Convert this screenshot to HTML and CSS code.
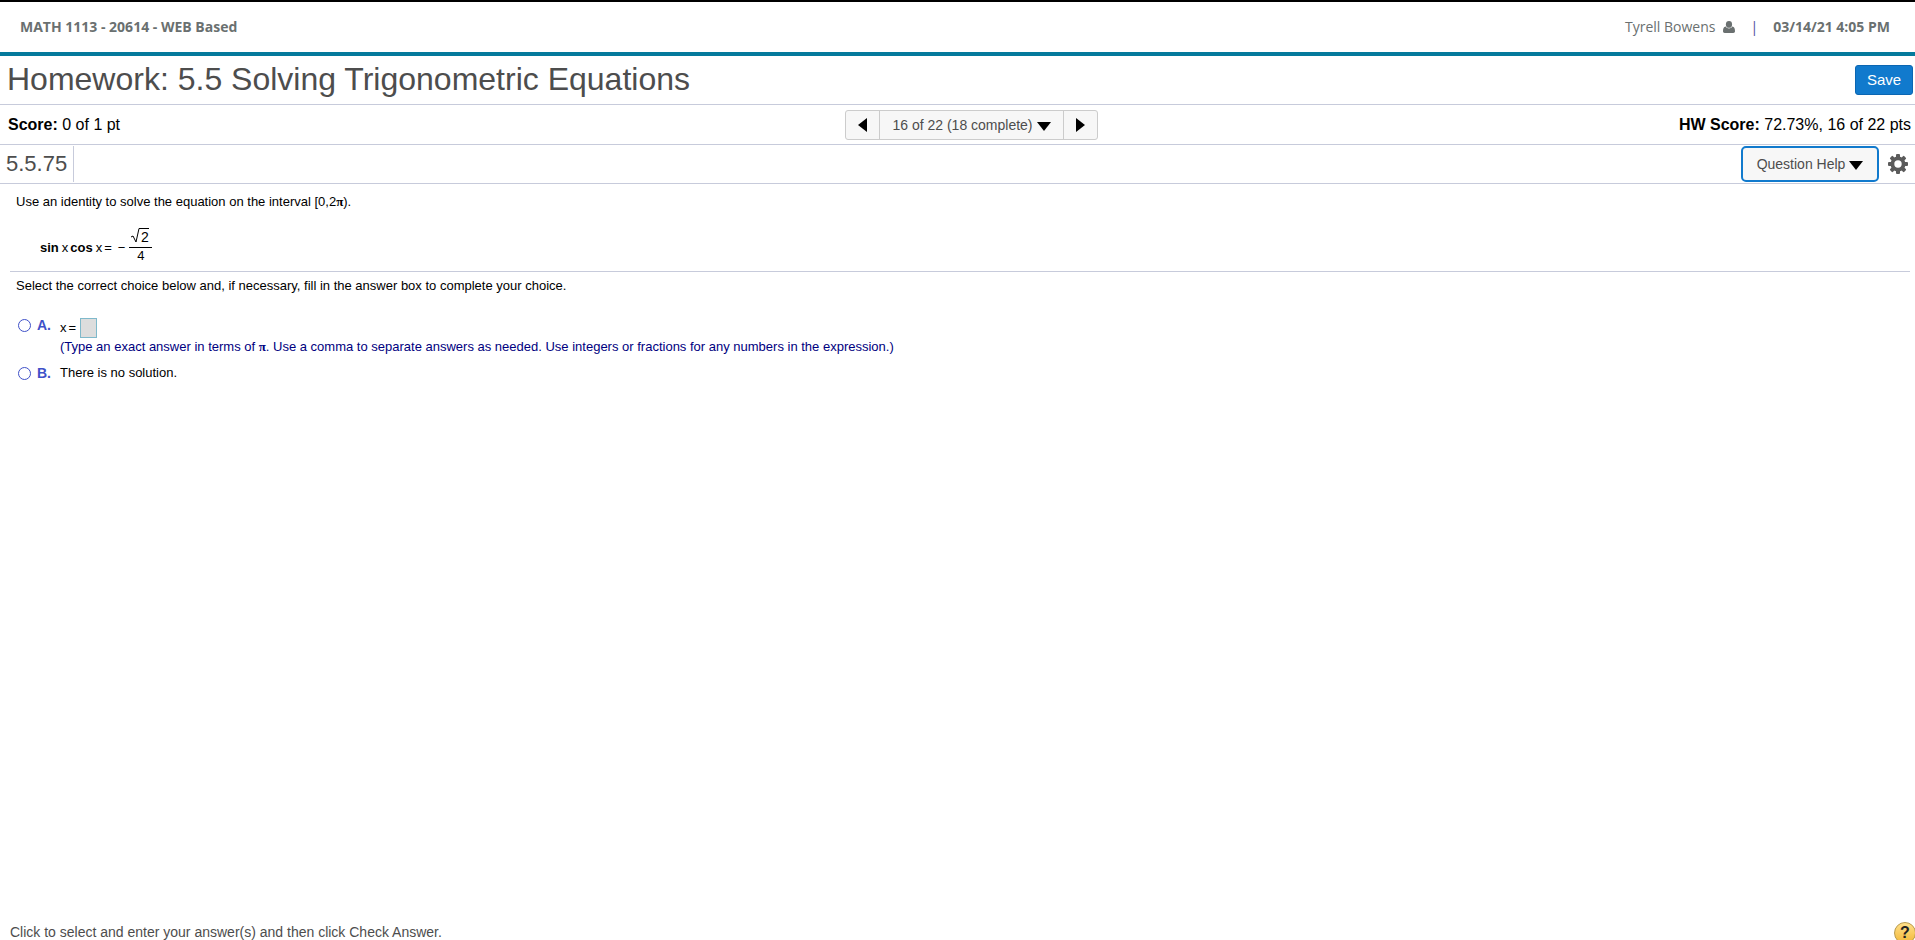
FILE: index.html
```html
<!DOCTYPE html>
<html lang="en">
<head>
<meta charset="utf-8">
<title>Homework: 5.5 Solving Trigonometric Equations</title>
<link rel="stylesheet" href="styles.css">
</head>
<body>
<div class="page">
  <header class="topbar">
    <span class="course">MATH 1113 - 20614 - WEB Based</span>
    <div class="account">
      <span>Tyrell Bowens</span>
      <svg class="user-icon" viewBox="0 0 12 12" aria-hidden="true"><ellipse cx="6" cy="3.400" rx="3.100" ry="3.400"/><path d="M2.700 5.500C3.500 6.900 4.600 7.400 6 7.400S8.500 6.900 9.300 5.500C11.400 5.900 12 7.800 12 10.300C12 11.400 11.300 12 10.300 12H1.700C.7 12 0 11.400 0 10.300C0 7.800.6 5.900 2.700 5.500Z"/></svg>
      <span class="divider">|</span>
      <time class="date" datetime="2021-03-14T16:05">03/14/21 4:05 PM</time>
    </div>
  </header>

  <div class="titlebar">
    <h1 class="title">Homework: 5.5 Solving Trigonometric Equations</h1>
    <button class="save" type="button">Save</button>
  </div>

  <div class="scorebar">
    <span><b>Score:</b> 0 of 1 pt</span>
    <nav class="pager" aria-label="Questions">
      <button class="pager-step" type="button" aria-label="Previous question"><svg class="arrow-side" viewBox="0 0 9 14"><path d="M9 0V14L0 7Z"/></svg></button>
      <button class="pager-list" type="button">16 of 22 (18 complete)<svg class="arrow-down" viewBox="0 0 14 9"><path d="M0 0H14L7 9Z"/></svg></button>
      <button class="pager-step" type="button" aria-label="Next question"><svg class="arrow-side" viewBox="0 0 9 14"><path d="M0 0V14L9 7Z"/></svg></button>
    </nav>
    <span class="hw-score"><b>HW Score:</b> 72.73%, 16 of 22 pts</span>
  </div>

  <div class="questionbar">
    <h2 class="question-id">5.5.75</h2>
    <div class="tools">
      <button class="help" type="button">Question Help<svg class="arrow-down" viewBox="0 0 14 9"><path d="M0 0H14L7 9Z"/></svg></button>
      <button class="settings" type="button" aria-label="Settings"><svg class="gear" viewBox="-10 -10 20 20"><rect x="-2" y="-10" width="4" height="20" rx="1"/><rect x="-2" y="-10" width="4" height="20" rx="1" transform="rotate(45)"/><rect x="-2" y="-10" width="4" height="20" rx="1" transform="rotate(90)"/><rect x="-2" y="-10" width="4" height="20" rx="1" transform="rotate(135)"/><circle r="7.500"/><circle class="gear-hole" r="3.700"/></svg></button>
    </div>
  </div>

  <main class="content">
    <section class="problem">
      <p class="text">Use an identity to solve the equation on the interval [0,2<span class="pi">π</span>).</p>
      <div class="equation">
        <b>sin</b><span>x</span><b>cos</b><span>x</span><span>=</span><span class="minus">−</span>
        <span class="fraction">
          <span class="numerator"><svg class="root" viewBox="0 0 18 15" aria-hidden="true"><path d="M0 9L2 8L5 14L8 .5H18"/></svg><span>2</span></span>
          <span class="denominator">4</span>
        </span>
      </div>
    </section>

    <form class="answers">
      <p class="text">Select the correct choice below and, if necessary, fill in the answer box to complete your choice.</p>
      <div class="choice choice-a">
        <input class="radio" type="radio" name="choice" id="choice-a">
        <label class="letter" for="choice-a">A.</label>
        <div class="choice-body">
          <div class="answer-line"><label class="answer-label" for="answer"><span>x</span><span>=</span></label><input class="answer" id="answer" type="text"></div>
          <p class="hint">(Type an exact answer in terms of <span class="pi">π</span>. Use a comma to separate answers as needed. Use integers or fractions for any numbers in the expression.)</p>
        </div>
      </div>
      <div class="choice">
        <input class="radio" type="radio" name="choice" id="choice-b">
        <label class="letter" for="choice-b">B.</label>
        <label for="choice-b">There is no solution.</label>
      </div>
    </form>
  </main>

  <footer class="footer">Click to select and enter your answer(s) and then click Check Answer.</footer>
  <button class="assist" type="button" aria-label="Help">?</button>
</div>
</body>
</html>
```
FILE: styles.css
```css
* {
  box-sizing: border-box;
}

body {
  margin: 0;
  background: #fff;
  color: #000;
  font: 13px/16px "Liberation Sans", Arial, sans-serif;
}

h1, h2, p {
  margin: 0;
  font-weight: normal;
}

button {
  margin: 0;
  padding: 0;
  border: 0;
  background: none;
  font: 14px/16px "Liberation Sans", Arial, sans-serif;
  color: #4d4d4d;
}

.page {
  position: relative;
  display: flex;
  flex-direction: column;
  height: 100vh;
  overflow: hidden;
}

.topbar {
  display: flex;
  align-items: center;
  justify-content: space-between;
  height: 56px;
  padding: 0 25px 0 20px;
  border-top: 2px solid #000;
  border-bottom: 4px solid #047a9c;
  color: #6a7070;
  font: 14px/20px "Open Sans", sans-serif;
}

.course,
.date {
  font-weight: 700;
}

.account {
  display: flex;
  align-items: center;
}

.user-icon {
  width: 12px;
  height: 12px;
  margin-left: 8px;
  fill: #6a7070;
}

.divider {
  margin: 0 15px;
  color: #4a4a9c;
}

.titlebar,
.scorebar,
.questionbar {
  display: flex;
  align-items: center;
  justify-content: space-between;
  border-bottom: 1px solid #c7cbdb;
}

.titlebar {
  height: 49px;
  padding: 0 2px 0 7px;
}

.title {
  align-self: flex-start;
  color: #4d4d4d;
  font-size: 32px;
  line-height: 46px;
}

.save {
  width: 58px;
  height: 30px;
  border: 1px solid #0b66b2;
  border-radius: 3px;
  background: #117acd;
  color: #fff;
  font-size: 15px;
}

.scorebar {
  display: grid;
  grid-template-columns: 1fr auto 1fr;
  height: 40px;
  padding: 0 4px 0 8px;
  font-size: 16px;
}

.hw-score {
  text-align: right;
}

.pager {
  display: flex;
  height: 30px;
  margin-left: 24px;
  border: 1px solid #ccc;
  border-radius: 3px;
  background: #f7f7f7;
}

.pager-step {
  display: flex;
  align-items: center;
  justify-content: center;
  width: 33px;
}

.pager-list {
  padding: 0 12px;
  border: solid #ccc;
  border-width: 0 1px;
}

.arrow-side {
  width: 9px;
  height: 14px;
}

.arrow-down {
  width: 14px;
  height: 9px;
  margin-left: 4px;
  vertical-align: -1px;
  fill: #000;
}

.questionbar {
  height: 39px;
  padding-right: 7px;
}

.question-id {
  align-self: stretch;
  margin: 1px 0;
  padding: 0 6px;
  border-right: 1px solid #c7cbdb;
  color: #4d4d4d;
  font-size: 22px;
  line-height: 36px;
}

.tools {
  display: flex;
  align-items: center;
  gap: 9px;
}

.help {
  width: 138px;
  height: 36px;
  border: 2px solid #117acd;
  border-radius: 5px;
  background: #f7f7f7;
}

.settings,
.gear {
  display: block;
  width: 20px;
  height: 20px;
  fill: #5b5b5b;
}

.gear .gear-hole {
  fill: #fff;
}

.content {
  flex: 1;
  padding: 10px 5px 0 10px;
}

.problem {
  height: 78px;
  border-bottom: 1px solid #c7cbdb;
}

.text {
  padding-left: 6px;
}

.pi {
  font-family: "Liberation Serif", serif;
  font-weight: bold;
  line-height: 1;
}

.equation {
  display: flex;
  align-items: center;
  gap: 2px;
  padding: 18px 0 0 30px;
}

.equation b + span {
  margin-left: 1px;
}

.minus {
  margin: 0 2px 0 4px;
}

.fraction {
  display: flex;
  flex-direction: column;
  width: 23px;
  margin-bottom: 4px;
  text-align: center;
}

.numerator {
  position: relative;
  padding-left: 8px;
  height: 20px;
  border-bottom: 1px solid #000;
  font-size: 14px;
  line-height: 18px;
}

.root {
  position: absolute;
  top: 0;
  left: 2px;
  width: 18px;
  height: 15px;
  fill: none;
  stroke: #000;
}

.answers {
  padding-top: 6px;
}

.choice {
  display: flex;
  align-items: flex-start;
  padding-left: 8px;
}

.choice-a {
  margin: 23px 0 10px;
}

.radio {
  appearance: none;
  width: 13px;
  height: 13px;
  margin: 2px 0 0;
  border: 1px solid #3f51c8;
  border-radius: 50%;
}

.letter {
  width: 23px;
  margin-left: 6px;
  color: #3f51c8;
  font-size: 14px;
  font-weight: bold;
}

.answer-line {
  display: flex;
  align-items: center;
  gap: 4px;
  height: 21px;
  margin-bottom: 1px;
}

.answer-label {
  display: flex;
  gap: 2px;
}

.answer {
  width: 17px;
  height: 20px;
  padding: 0;
  border: 1px solid #7fb9cb;
  background: #ddd;
}

.hint {
  color: #000080;
}

.footer {
  padding: 0 10px;
  color: #4d4d4d;
  font-size: 14px;
  line-height: 16px;
}

.assist {
  position: absolute;
  right: -1px;
  bottom: -4px;
  width: 22px;
  height: 22px;
  border: 1px solid #b99a4c;
  border-radius: 50%;
  background: linear-gradient(#ffe08a, #f3b838);
  color: #222;
  font-size: 16px;
  font-weight: bold;
}
```
